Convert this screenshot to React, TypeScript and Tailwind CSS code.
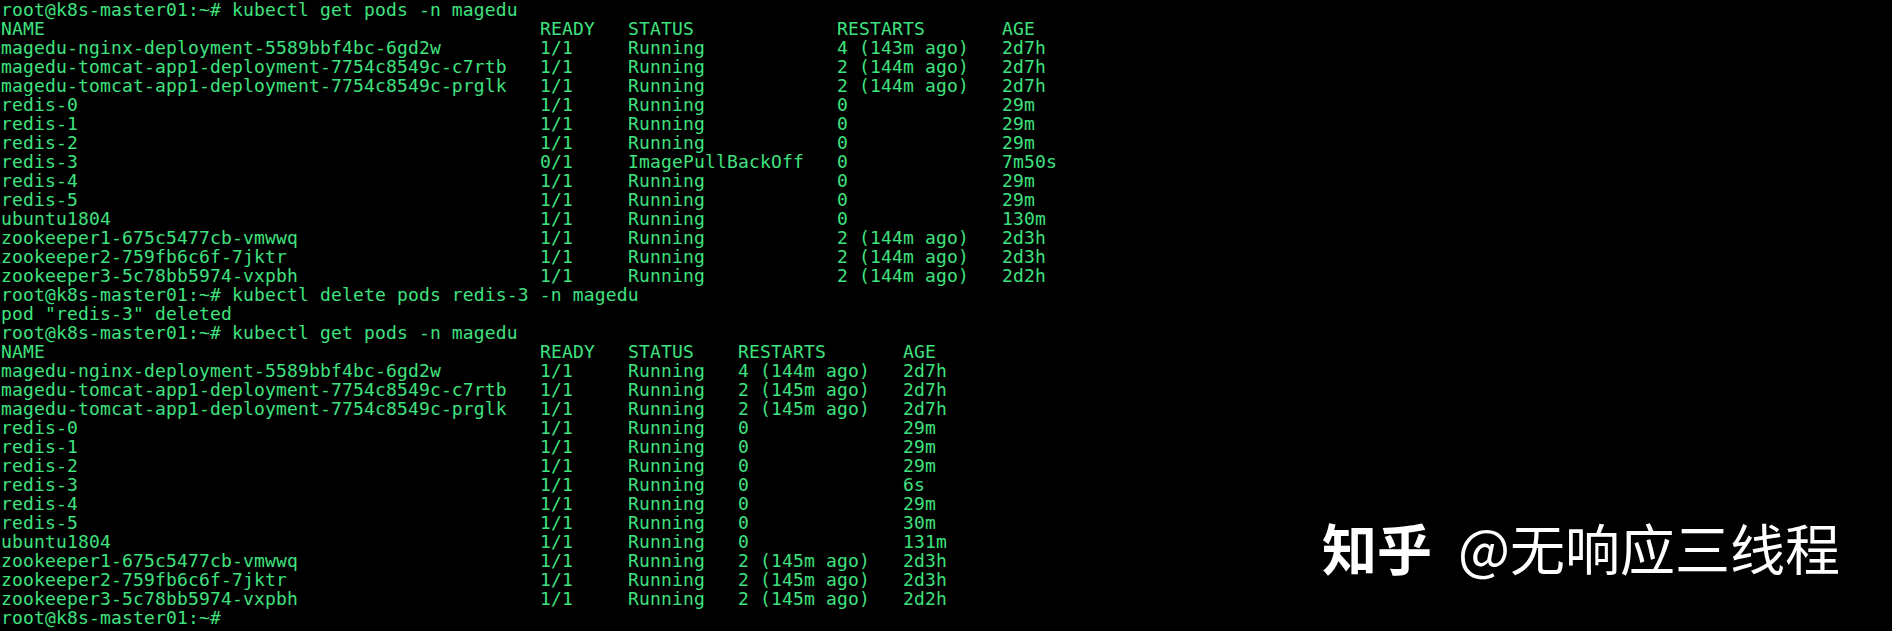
type Row = [string, string, string, string, string];

const first: Row[] = [
  ["NAME", "READY", "STATUS", "RESTARTS", "AGE"],
  ["magedu-nginx-deployment-5589bbf4bc-6gd2w", "1/1", "Running", "4 (143m ago)", "2d7h"],
  ["magedu-tomcat-app1-deployment-7754c8549c-c7rtb", "1/1", "Running", "2 (144m ago)", "2d7h"],
  ["magedu-tomcat-app1-deployment-7754c8549c-prglk", "1/1", "Running", "2 (144m ago)", "2d7h"],
  ["redis-0", "1/1", "Running", "0", "29m"],
  ["redis-1", "1/1", "Running", "0", "29m"],
  ["redis-2", "1/1", "Running", "0", "29m"],
  ["redis-3", "0/1", "ImagePullBackOff", "0", "7m50s"],
  ["redis-4", "1/1", "Running", "0", "29m"],
  ["redis-5", "1/1", "Running", "0", "29m"],
  ["ubuntu1804", "1/1", "Running", "0", "130m"],
  ["zookeeper1-675c5477cb-vmwwq", "1/1", "Running", "2 (144m ago)", "2d3h"],
  ["zookeeper2-759fb6c6f-7jktr", "1/1", "Running", "2 (144m ago)", "2d3h"],
  ["zookeeper3-5c78bb5974-vxpbh", "1/1", "Running", "2 (144m ago)", "2d2h"],
];

const second: Row[] = [
  ["NAME", "READY", "STATUS", "RESTARTS", "AGE"],
  ["magedu-nginx-deployment-5589bbf4bc-6gd2w", "1/1", "Running", "4 (144m ago)", "2d7h"],
  ["magedu-tomcat-app1-deployment-7754c8549c-c7rtb", "1/1", "Running", "2 (145m ago)", "2d7h"],
  ["magedu-tomcat-app1-deployment-7754c8549c-prglk", "1/1", "Running", "2 (145m ago)", "2d7h"],
  ["redis-0", "1/1", "Running", "0", "29m"],
  ["redis-1", "1/1", "Running", "0", "29m"],
  ["redis-2", "1/1", "Running", "0", "29m"],
  ["redis-3", "1/1", "Running", "0", "6s"],
  ["redis-4", "1/1", "Running", "0", "29m"],
  ["redis-5", "1/1", "Running", "0", "30m"],
  ["ubuntu1804", "1/1", "Running", "0", "131m"],
  ["zookeeper1-675c5477cb-vmwwq", "1/1", "Running", "2 (145m ago)", "2d3h"],
  ["zookeeper2-759fb6c6f-7jktr", "1/1", "Running", "2 (145m ago)", "2d3h"],
  ["zookeeper3-5c78bb5974-vxpbh", "1/1", "Running", "2 (145m ago)", "2d2h"],
];

const Table = ({ rows, wide }: { rows: Row[]; wide: boolean }) => (
  <>
    {rows.map((r, i) => (
      <div key={i} className="flex">
        <span className="w-[539px] shrink-0">{r[0]}</span>
        <span className="w-[88px] shrink-0">{r[1]}</span>
        <span className={wide ? "w-[209px] shrink-0" : "w-[110px] shrink-0"}>{r[2]}</span>
        <span className="w-[165px] shrink-0">{r[3]}</span>
        <span>{r[4]}</span>
      </div>
    ))}
  </>
);

export default function App() {
  return (
    <div className="relative w-[1892px] h-[631px] overflow-hidden bg-black">
      <div className="pl-[1px] font-['DejaVu_Sans_Mono',monospace] text-[18px] tracking-[0.16px] leading-[19px] text-[#3fe27f] whitespace-pre">
        <div>root@k8s-master01:~# kubectl get pods -n magedu</div>
        <Table rows={first} wide={true} />
        <div>root@k8s-master01:~# kubectl delete pods redis-3 -n magedu</div>
        <div>pod "redis-3" deleted</div>
        <div>root@k8s-master01:~# kubectl get pods -n magedu</div>
        <Table rows={second} wide={false} />
        <div>root@k8s-master01:~#</div>
      </div>

      {/* zhihu watermark */}
      <div className="absolute left-[1322px] top-[514px] flex items-center text-white text-[55px] leading-[64px] font-['Noto_Sans_CJK_SC',sans-serif] whitespace-pre">
        <span className="font-bold">知乎</span>
        <span className="ml-[26px]">@无响应三线程</span>
      </div>
    </div>
  );
}
